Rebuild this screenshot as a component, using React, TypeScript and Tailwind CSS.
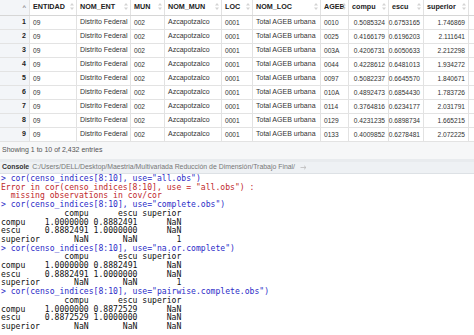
import React from "react";

const cols = ["", "ENTIDAD", "NOM_ENT", "MUN", "NOM_MUN", "LOC", "NOM_LOC", "AGEB", "compu", "escu", "superior"];

const rows = [
  ["0010", "0.5085324", "0.6753165", "1.746869"],
  ["0025", "0.4166179", "0.6196203", "2.111641"],
  ["003A", "0.4206731", "0.6050633", "2.212298"],
  ["0044", "0.4228612", "0.6481013", "1.934272"],
  ["0097", "0.5082237", "0.6645570", "1.840671"],
  ["010A", "0.4892473", "0.6854430", "1.783726"],
  ["0114", "0.3764816", "0.6234177", "2.031791"],
  ["0129", "0.4231235", "0.6898734", "1.665215"],
  ["0133", "0.4009852", "0.6278481", "2.072225"],
];

const gridCols = "grid grid-cols-[30px_47px_54px_34px_57px_31px_68px_28px_40px_35px_45px]";

const SortIcon = () => (
  <svg width="4" height="7" viewBox="0 0 4 7" className="absolute right-[2px] top-[3px]">
    <path d="M2 0 L4 2.5 L0 2.5 Z" fill="#d4d4d4" />
    <path d="M2 7 L4 4.5 L0 4.5 Z" fill="#d4d4d4" />
  </svg>
);

type Line = { t: string; c: "cmd" | "err" | "out" };

const consoleLines: Line[] = [
  { t: '> cor(censo_indices[8:10], use="all.obs")', c: "cmd" },
  { t: 'Error in cor(censo_indices[8:10], use = "all.obs") :', c: "err" },
  { t: "  missing observations in cov/cor", c: "err" },
  { t: '> cor(censo_indices[8:10], use="complete.obs")', c: "cmd" },
  { t: "             compu      escu superior", c: "out" },
  { t: "compu    1.0000000 0.8882491      NaN", c: "out" },
  { t: "escu     0.8882491 1.0000000      NaN", c: "out" },
  { t: "superior       NaN       NaN        1", c: "out" },
  { t: '> cor(censo_indices[8:10], use="na.or.complete")', c: "cmd" },
  { t: "             compu      escu superior", c: "out" },
  { t: "compu    1.0000000 0.8882491      NaN", c: "out" },
  { t: "escu     0.8882491 1.0000000      NaN", c: "out" },
  { t: "superior       NaN       NaN        1", c: "out" },
  { t: '> cor(censo_indices[8:10], use="pairwise.complete.obs")', c: "cmd" },
  { t: "             compu      escu superior", c: "out" },
  { t: "compu    1.0000000 0.8872529      NaN", c: "out" },
  { t: "escu     0.8872529 1.0000000      NaN", c: "out" },
  { t: "superior       NaN       NaN      NaN", c: "out" },
];

export default function App() {
  return (
    <div className="w-[474px] h-[335px] overflow-hidden bg-white font-['Liberation_Sans',Arial,sans-serif] text-[#333]">
      {/* data viewer */}
      <div className="w-[474px]">
        <div className={`${gridCols} h-[16px] border-b border-[#d6d6d6] text-[7.2px] font-bold text-[#222]`}>
          {cols.map((c, i) => (
            <div
              key={i}
              className={`relative flex items-center border-r border-[#e2e2e2] ${i === 0 ? "justify-end pr-[3px] bg-[#f3f5f8]" : "pl-[3px]"}`}
            >
              {i === 0 ? <span className="text-[6px] text-[#888]">^</span> : c}
              {i > 0 && <SortIcon />}
            </div>
          ))}
        </div>
        {rows.map((r, n) => (
          <div key={n} className={`${gridCols} h-[14px] border-b border-[#e3e3e3] text-[7px] text-[#333]`}>
            <div className="flex items-center justify-end pr-[3px] bg-[#f3f5f8] border-r border-[#e2e2e2] font-bold text-[#222]">
              {n + 1}
            </div>
            <div className="flex items-center pl-[3px] border-r border-[#e2e2e2] text-[6.6px]">09</div>
            <div className="flex items-center pl-[3px] border-r border-[#e2e2e2]">Distrito Federal</div>
            <div className="flex items-center pl-[3px] border-r border-[#e2e2e2] text-[6.6px]">002</div>
            <div className="flex items-center pl-[3px] border-r border-[#e2e2e2]">Azcapotzalco</div>
            <div className="flex items-center pl-[3px] border-r border-[#e2e2e2] text-[6.6px]">0001</div>
            <div className="flex items-center pl-[3px] border-r border-[#e2e2e2]">Total AGEB urbana</div>
            <div className="flex items-center pl-[3px] border-r border-[#e2e2e2] text-[6.6px]">{r[0]}</div>
            <div className="flex items-center justify-end pr-[3px] border-r border-[#e2e2e2] text-[6.6px]">{r[1]}</div>
            <div className="flex items-center justify-end pr-[3px] border-r border-[#e2e2e2] text-[6.6px]">{r[2]}</div>
            <div className="flex items-center justify-end pr-[3px] border-r border-[#e2e2e2] text-[6.6px]">{r[3]}</div>
          </div>
        ))}
        <div className="h-[17px] flex items-center pl-[2px] bg-[#f6f7f8] text-[7px] text-[#555]">
          Showing 1 to 10 of 2,432 entries
        </div>
        <div className="h-[3px] bg-[#e8ebee]" />
      </div>

      {/* console */}
      <div className="h-[12px] flex items-center gap-[3px] pl-[2px] bg-[#eef1f4] border-b border-[#dde1e5] text-[6.9px]">
        <span className="font-bold text-[#333]">Console</span>
        <span className="text-[#777]">C:/Users/DELL/Desktop/Maestria/Multivariada Reducción de Dimensión/Trabajo Final/</span>
        <svg width="7" height="5" viewBox="0 0 7 5" className="ml-[2px]">
          <path d="M0.5 2.5 H6 M4 0.7 L6 2.5 L4 4.3" stroke="#bbb" strokeWidth="0.8" fill="none" />
        </svg>
      </div>
      <div className="pl-[1px] font-['DejaVu_Sans_Mono',monospace] text-[8.1px] leading-[8.7px]">
        {consoleLines.map((l, i) => (
          <div
            key={i}
            className={`whitespace-pre ${l.c === "cmd" ? "text-[#2d2dc8]" : l.c === "err" ? "text-[#c0282d]" : "text-[#111]"}`}
          >
            {l.t}
          </div>
        ))}
      </div>
    </div>
  );
}
